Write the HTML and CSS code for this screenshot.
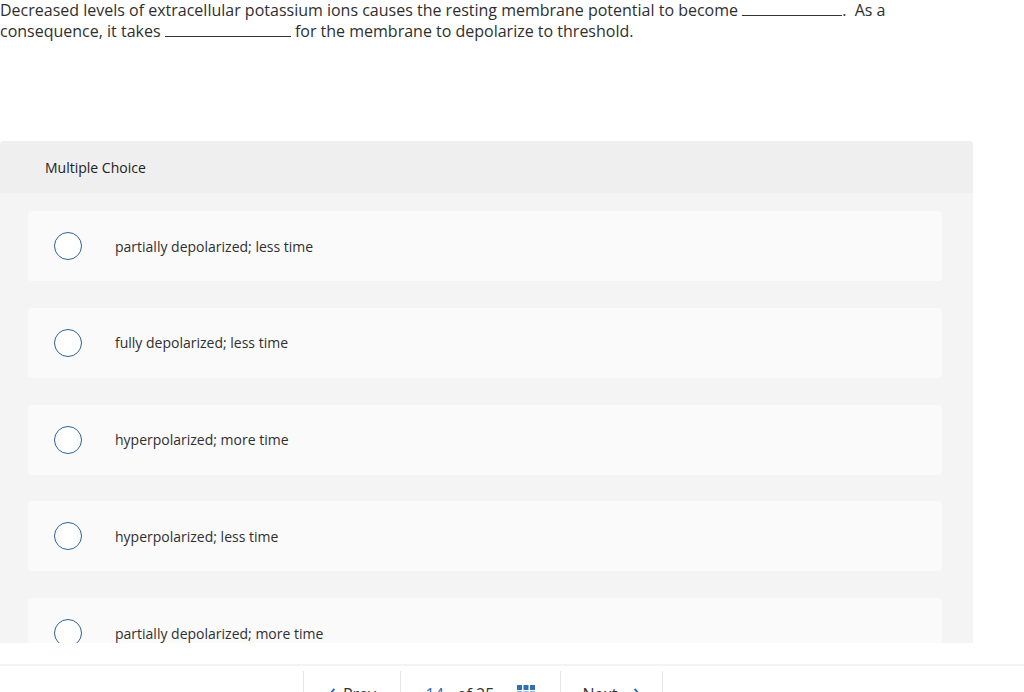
FILE: index.html
```html
<!DOCTYPE html>
<html lang="en">
<head>
<meta charset="utf-8">
<title>Multiple Choice</title>
<link rel="stylesheet" href="styles.css">
</head>
<body>
<div class="scroll">
  <p class="question">Decreased levels of extracellular potassium ions causes the resting membrane potential to become <span class="blank blank-a"></span>.&nbsp; As a consequence, it takes <span class="blank blank-b"></span> for the membrane to depolarize to threshold.</p>
  <section class="card">
    <header class="card-head">Multiple Choice</header>
    <div class="card-body">
      <label class="option"><span class="radio"></span><span class="opt-text">partially depolarized; less time</span></label>
      <label class="option"><span class="radio"></span><span class="opt-text">fully depolarized; less time</span></label>
      <label class="option"><span class="radio"></span><span class="opt-text">hyperpolarized; more time</span></label>
      <label class="option"><span class="radio"></span><span class="opt-text">hyperpolarized; less time</span></label>
      <label class="option"><span class="radio"></span><span class="opt-text">partially depolarized; more time</span></label>
    </div>
  </section>
</div>
<footer class="footer">
  <nav class="pager">
    <a class="pager-item prev"><svg class="chev" viewBox="0 0 10 16" width="8" height="13"><path d="M8 1 L2 8 L8 15" fill="none" stroke="#2f6fb5" stroke-width="2.5"/></svg><span>Prev</span></a>
    <div class="pager-item count"><span class="cur">14</span><span class="of">of 25</span><svg class="grid" viewBox="0 0 18 18" width="18" height="18"><rect x="0" y="0" width="5" height="5" fill="#2f6fb5"/><rect x="6.5" y="0" width="5" height="5" fill="#2f6fb5"/><rect x="13" y="0" width="5" height="5" fill="#2f6fb5"/><rect x="0" y="6.5" width="5" height="5" fill="#2f6fb5"/><rect x="6.5" y="6.5" width="5" height="5" fill="#2f6fb5"/><rect x="13" y="6.5" width="5" height="5" fill="#2f6fb5"/></svg></div>
    <a class="pager-item next"><span>Next</span><svg class="chev" viewBox="0 0 10 16" width="8" height="13"><path d="M2 1 L8 8 L2 15" fill="none" stroke="#2f6fb5" stroke-width="2.5"/></svg></a>
  </nav>
</footer>
</body>
</html>
```

FILE: styles.css
```css
html, body {
  margin: 0;
  padding: 0;
  background: #fff;
}
body {
  font-family: "Open Sans", "Liberation Sans", sans-serif;
  color: #333;
  height: 692px;
  overflow: hidden;
}
.scroll {
  height: 643px;
  overflow: hidden;
}
.question {
  margin: 0;
  width: 930px;
  font-size: 16px;
  line-height: 21px;
  color: #2f2f2f;
}
.blank {
  display: inline-block;
  border-bottom: 1px solid #333;
  vertical-align: baseline;
}
.blank-a { width: 100px; }
.blank-b { width: 126px; }
.card {
  margin-top: 99px;
  width: 973px;
  background: #f4f4f4;
  border-radius: 4px 4px 0 0;
  overflow: hidden;
}
.card-head {
  height: 52px;
  background: #efefef;
  display: flex;
  align-items: center;
  padding-left: 45px;
  font-size: 14px;
  color: #222;
}
.card-body {
  padding: 18px 31px 20px 28px;
  display: flex;
  flex-direction: column;
  gap: 26.75px;
}
.option {
  height: 70px;
  background: #fafafa;
  border-radius: 4px;
  display: flex;
  align-items: center;
  padding-left: 26px;
}
.radio {
  width: 26px;
  height: 26px;
  border: 1.5px solid #2c619a;
  border-radius: 50%;
  background: #fff;
  flex: none;
}
.opt-text {
  margin-left: 33px;
  font-size: 14px;
  color: #2f2f2f;
}
.footer {
  margin-top: 21px;
  border-top: 2px solid #f3f3f3;
}
.pager {
  display: flex;
  margin-left: 303px;
  padding-top: 5px;
}
.pager-item {
  height: 46px;
  border-left: 1px solid #e6e6e6;
  display: flex;
  align-items: center;
  justify-content: center;
  gap: 7px;
  font-size: 16px;
  color: #333;
}
.pager-item.next {
  border-right: 1px solid #e6e6e6;
  gap: 15px;
}
.prev { width: 96px; }
.count { width: 159px; }
.next { width: 101px; }
.cur { color: #2f6fb5; }
.of { margin-left: 6px; }
.grid { margin-left: 16px; }
```
